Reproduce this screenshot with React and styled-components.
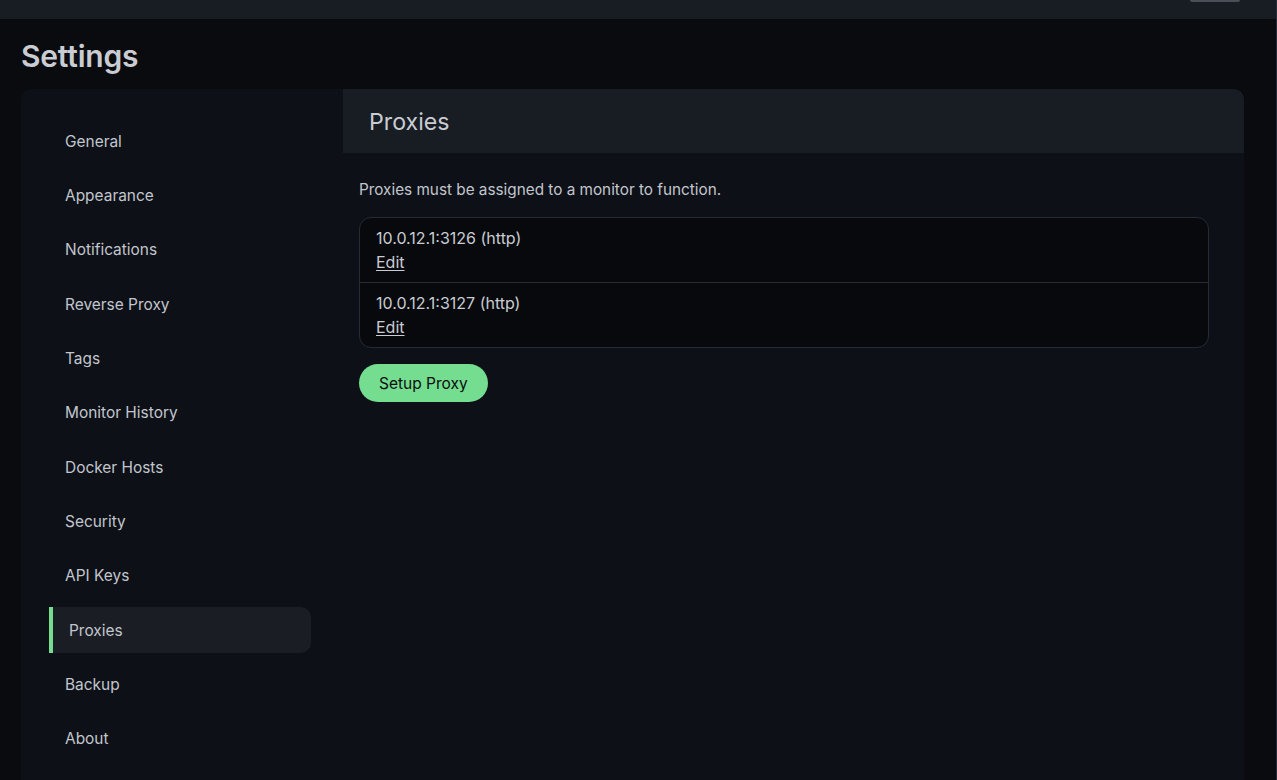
import React from "react";
import styled, { createGlobalStyle } from "styled-components";

const GlobalStyle = createGlobalStyle`
  html, body {
    margin: 0;
    padding: 0;
    background: #0a0b0f;
    font-family: Inter, "Noto Sans", "Liberation Sans", sans-serif;
    color: #c5c9d0;
    overflow: hidden;
  }
`;

const Page = styled.div`
  height: 780px;
  display: flex;
  flex-direction: column;
  border-right: 1px solid #252b38;
  box-sizing: border-box;
`;

const TopBar = styled.div`
  height: 19px;
  flex-shrink: 0;
  background: #181c23;
  display: flex;
  justify-content: flex-end;
  padding-right: 36px;
`;

const TopPill = styled.div`
  width: 50px;
  height: 2px;
  background: #4a4f57;
  border-radius: 0 0 14px 14px;
`;

const Main = styled.div`
  flex: 1;
  padding: 0 32px 0 21px;
  display: flex;
  flex-direction: column;
  min-height: 0;
`;

const Title = styled.h1`
  margin: 0;
  height: 70px;
  padding-top: 3px;
  box-sizing: border-box;
  display: flex;
  align-items: center;
  font-size: 30px;
  font-weight: 600;
  letter-spacing: -0.2px;
  color: #c9ccd2;
`;

const Card = styled.div`
  flex: 1;
  display: grid;
  grid-template-columns: 322px 1fr;
  background: #0d1017;
  border-radius: 10px 10px 0 0;
  overflow: hidden;
`;

const Menu = styled.nav`
  display: flex;
  flex-direction: column;
  gap: 8.36px;
  padding: 29px 32px 0 28px;
`;

const MenuItem = styled.div`
  height: 46px;
  display: flex;
  align-items: center;
  padding-left: 16px;
  font-size: 15.45px;
  color: #c2c6cd;
  border-radius: 0 10px 10px 0;
  border-left: 4px solid ${(p) => (p.$active ? "#74dd8f" : "transparent")};
  background: ${(p) => (p.$active ? "#1a1d24" : "transparent")};
  margin-left: ${(p) => (p.$active ? "0" : "-4px")};
`;

const Panel = styled.section`
  display: flex;
  flex-direction: column;
`;

const PanelHeader = styled.div`
  height: 64px;
  padding-top: 2px;
  box-sizing: border-box;
  display: flex;
  align-items: center;
  padding-left: 26px;
  background: #181c23;
  font-size: 23.2px;
  color: #c9ccd2;
`;

const PanelBody = styled.div`
  padding: 25px 35px 0 16px;
`;

const Description = styled.p`
  margin: 0 0 15px;
  font-size: 15.3px;
  line-height: 24px;
  color: #c2c6cd;
`;

const ProxyList = styled.ul`
  list-style: none;
  margin: 0 0 16px;
  padding: 0;
  background: #07090d;
  border: 1px solid #262b36;
  border-radius: 12px;
  overflow: hidden;
`;

const ProxyRow = styled.li`
  height: 64px;
  box-sizing: border-box;
  padding: 8px 16px 0;
  display: flex;
  flex-direction: column;
  & + & {
    border-top: 1px solid #262b36;
    height: 65px;
  }
`;

const ProxyName = styled.span`
  font-size: 16px;
  line-height: 24px;
  color: #c9ccd2;
`;

const EditLink = styled.a`
  font-size: 16px;
  line-height: 24px;
  color: #c9ccd2;
  text-decoration: underline;
  text-underline-offset: 2px;
  cursor: pointer;
  align-self: flex-start;
`;

const SetupButton = styled.button`
  height: 38px;
  padding: 0 20px;
  border: none;
  border-radius: 19px;
  background: #74dd8f;
  color: #0b0d10;
  font-family: inherit;
  font-size: 15.5px;
  cursor: pointer;
`;

const menu = [
  "General",
  "Appearance",
  "Notifications",
  "Reverse Proxy",
  "Tags",
  "Monitor History",
  "Docker Hosts",
  "Security",
  "API Keys",
  "Proxies",
  "Backup",
  "About",
];

const proxies = ["10.0.12.1:3126 (http)", "10.0.12.1:3127 (http)"];

export default function App() {
  return (
    <Page>
      <GlobalStyle />
      <TopBar>
        <TopPill />
      </TopBar>
      <Main>
        <Title>Settings</Title>
        <Card>
          <Menu>
            {menu.map((m) => (
              <MenuItem key={m} $active={m === "Proxies"}>
                {m}
              </MenuItem>
            ))}
          </Menu>
          <Panel>
            <PanelHeader>Proxies</PanelHeader>
            <PanelBody>
              <Description>Proxies must be assigned to a monitor to function.</Description>
              <ProxyList>
                {proxies.map((p) => (
                  <ProxyRow key={p}>
                    <ProxyName>{p}</ProxyName>
                    <EditLink>Edit</EditLink>
                  </ProxyRow>
                ))}
              </ProxyList>
              <SetupButton>Setup Proxy</SetupButton>
            </PanelBody>
          </Panel>
        </Card>
      </Main>
    </Page>
  );
}
